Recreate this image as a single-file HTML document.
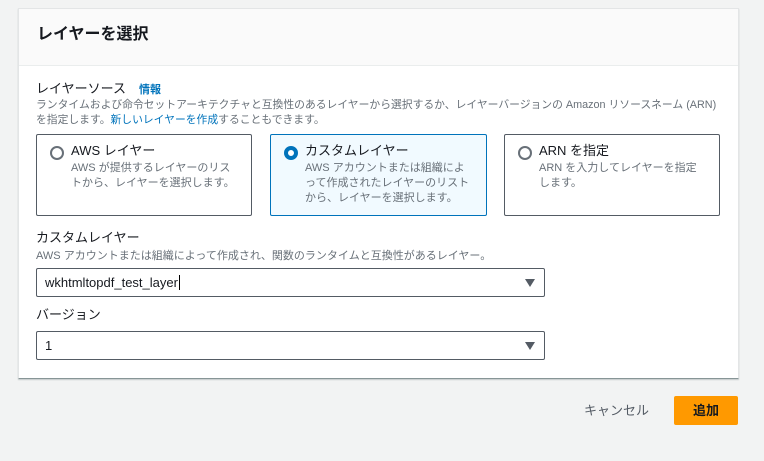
<!DOCTYPE html>
<html><head><meta charset="utf-8"><style>
*{box-sizing:border-box;margin:0;padding:0}
body{width:764px;height:461px;background:#f2f3f3;font-family:"Liberation Sans","Noto Sans CJK JP",sans-serif;color:#16191f;position:relative;overflow:hidden}
.card{position:absolute;left:18px;top:8px;width:721px;height:371px;background:#fff;border:1px solid #e3e5e6;border-bottom:1px solid #879596;box-shadow:0 1px 1px rgba(0,28,36,.2)}
.hd{height:57px;background:#fafafa;border-bottom:1px solid #eaeded;padding:15px 18px}
.hd h2{font-size:16px;font-weight:bold;line-height:22px}
.abs{position:absolute}
.lbl{font-size:13px;line-height:16px}
.desc{font-size:11px;line-height:15px;color:#687078}
a{color:#0073bb;text-decoration:none;font-weight:normal}
.tile{position:absolute;top:125px;height:82px;border:1px solid #545b64;border-radius:2px;background:#fff}
.tile.sel{border-color:#0073bb;background:#f1faff}
.r{position:absolute;left:13px;top:11px;width:14px;height:14px;border-radius:50%;border:2px solid #687078;background:#fff}
.sel .r{border:4px solid #0073bb}
.tt{position:absolute;left:34px;top:7px;font-size:13px;line-height:17px}
.td{position:absolute;left:34px;top:26px;width:165px}
.selbox{position:absolute;left:17px;width:509px;height:29px;border:1px solid #545b64;border-radius:2px;font-size:13px;padding:6px 8px}
.arr{position:absolute;right:9px;top:10px;width:0;height:0;border-left:5px solid transparent;border-right:5px solid transparent;border-top:8px solid #545b64}
</style></head><body>
<div class="card">
<div class="hd"><h2>レイヤーを選択</h2></div>
<div class="abs lbl" style="left:17px;top:72px">レイヤーソース　<a style="font-size:11px;font-weight:bold">情報</a></div>
<div class="abs desc" style="left:17px;top:89px;width:700px;font-size:10.8px">ランタイムおよび命令セットアーキテクチャと互換性のあるレイヤーから選択するか、レイヤーバージョンの Amazon リソースネーム (ARN)<br>を指定します。<a>新しいレイヤーを作成</a>することもできます。</div>
<div class="tile" style="left:17px;width:216px"><div class="r"></div><div class="tt">AWS レイヤー</div><div class="td desc">AWS が提供するレイヤーのリストから、レイヤーを選択します。</div></div>
<div class="tile sel" style="left:251px;width:217px"><div class="r"></div><div class="tt">カスタムレイヤー</div><div class="td desc">AWS アカウントまたは組織によって作成されたレイヤーのリストから、レイヤーを選択します。</div></div>
<div class="tile" style="left:485px;width:216px"><div class="r"></div><div class="tt">ARN を指定</div><div class="td desc">ARN を入力してレイヤーを指定します。</div></div>
<div class="abs lbl" style="left:17px;top:221px">カスタムレイヤー</div>
<div class="abs desc" style="left:17px;top:240px">AWS アカウントまたは組織によって作成され、関数のランタイムと互換性があるレイヤー。</div>
<div class="selbox" style="top:259px">wkhtmltopdf_test_layer<span style="border-left:1px solid #000;margin-left:1px"></span><div class="arr"></div></div>
<div class="abs lbl" style="left:17px;top:298px">バージョン</div>
<div class="selbox" style="top:322px">1<div class="arr"></div></div>
</div>
<div class="abs" style="left:584px;top:400px;font-size:13px;color:#545b64">キャンセル</div>
<div class="abs" style="left:674px;top:396px;width:64px;height:29px;background:#ff9900;border-radius:2px;font-size:13px;font-weight:bold;text-align:center;line-height:29px">追加</div>
</body></html>
